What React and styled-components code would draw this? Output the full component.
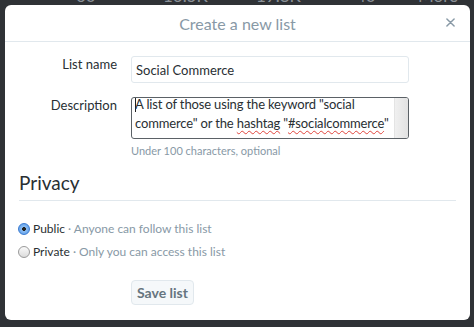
import React from 'react';
import styled, { createGlobalStyle } from 'styled-components';

const Global = createGlobalStyle`
  html, body {
    margin: 0;
    padding: 0;
    background: #2f3236;
    font-family: Lato, "Liberation Sans", sans-serif;
  }
`;

const Page = styled.div`
  position: relative;
  width: 474px;
  height: 327px;
  overflow: hidden;
  background: #2f3236;
`;

const Stats = styled.div`
  position: absolute;
  top: -15px;
  left: 0;
  right: 0;
  font-size: 17px;
  color: #8a9096;
`;

const Stat = styled.span`
  position: absolute;
  left: ${p => p.x}px;
`;

const Modal = styled.div`
  position: absolute;
  top: 5px;
  left: 5px;
  width: 465px;
  height: 315px;
  background: #fff;
  border-radius: 6px;
  display: flex;
  flex-direction: column;
`;

const Header = styled.div`
  height: 36px;
  border-bottom: 1px solid #e1e8ed;
  display: flex;
  align-items: center;
  justify-content: center;
  position: relative;
`;

const Title = styled.h3`
  margin: 0;
  font-size: 16px;
  font-weight: 400;
  color: #8899a6;
`;

const Close = styled.svg`
  position: absolute;
  right: 15px;
  top: 13px;
  width: 9px;
  height: 9px;
`;

const Body = styled.div`
  padding: 14px 14px 0 14px;
`;

const Row = styled.div`
  display: grid;
  grid-template-columns: 98px 278px;
  column-gap: 14px;
  margin-bottom: 14px;
`;

const Label = styled.label`
  text-align: right;
  font-size: 13px;
  color: #292f33;
`;

const Input = styled.div`
  height: 27px;
  box-sizing: border-box;
  border: 1px solid #e1e8ed;
  border-radius: 3px;
  padding: 0 4px;
  display: flex;
  align-items: center;
  font-size: 13px;
  color: #292f33;
`;

const TextArea = styled.div`
  height: 42px;
  box-sizing: border-box;
  border: 1px solid #5b6166;
  border-radius: 3px;
  padding: 0 0 0 3px;
  display: flex;
  overflow: hidden;
  font-size: 13px;
  line-height: 19px;
  color: #292f33;
`;

const AreaText = styled.div`
  flex: 1;
  height: 40px;
  overflow: hidden;
  margin-top: -3px;
  letter-spacing: -0.15px;
`;

const Caret = styled.span`
  display: inline-block;
  width: 1px;
  height: 15px;
  margin-right: -1px;
  vertical-align: -3px;
  background: #222;
`;

const Scroll = styled.div`
  width: 13px;
  background: linear-gradient(to right, #f0f0f0, #e2e2e2);
  border-left: 1px solid #e4e4e4;
`;

const Squiggle = styled.span`
  text-decoration: underline wavy #e0443c;
  text-decoration-thickness: 1px;
  text-underline-offset: 2px;
`;

const Hint = styled.div`
  grid-column: 2;
  font-size: 11px;
  color: #8899a6;
  margin-top: 5px;
`;

const Section = styled.h2`
  margin: 14px 0 0 0;
  font-size: 19px;
  font-weight: 400;
  color: #292f33;
  padding-bottom: 6px;
  border-bottom: 1px solid #e1e8ed;
`;

const Radios = styled.div`
  margin-top: 19px;
  display: flex;
  flex-direction: column;
  gap: 6px;
`;

const Option = styled.div`
  display: flex;
  align-items: center;
  font-size: 12px;
  color: #292f33;
  gap: 3px;
  height: 17px;
`;

const Radio = styled.span`
  width: 12px;
  height: 12px;
  border-radius: 50%;
  box-sizing: border-box;
  border: 1px solid ${p => (p.checked ? '#3b7bd1' : '#9a9a9a')};
  background: ${p =>
    p.checked
      ? 'radial-gradient(circle, #222 0 1.7px, #8fc0f5 2.2px, #4a90e2 100%)'
      : 'linear-gradient(#fafafa, #dcdcdc)'};
  margin-left: -1px;
`;

const Muted = styled.span`
  color: #8899a6;
`;

const Actions = styled.div`
  padding-left: 112px;
  margin-top: 20px;
`;

const Button = styled.button`
  height: 25px;
  padding: 0 5px;
  background: #f5f8fa;
  border: 1px solid #e1e8ed;
  border-radius: 4px;
  font-family: inherit;
  font-size: 14px;
  font-weight: 700;
  color: #66757f;
`;

export default function App() {
  return (
    <Page>
      <Global />
      <Stats>
        <Stat x={76}>60</Stat>
        <Stat x={163}>16.5K</Stat>
        <Stat x={256}>19.8K</Stat>
        <Stat x={356}>40</Stat>
        <Stat x={418}>More</Stat>
      </Stats>
      <Modal>
        <Header>
          <Title>Create a new list</Title>
          <Close viewBox="0 0 10 10">
            <path d="M1 1L9 9M9 1L1 9" stroke="#8899a6" strokeWidth="1.6" strokeLinecap="round" />
          </Close>
        </Header>
        <Body>
          <Row>
            <Label>List name</Label>
            <Input>Social Commerce</Input>
          </Row>
          <Row>
            <Label>Description</Label>
            <TextArea>
              <AreaText>
                <Caret />A list of those using the keyword "social commerce" or the{' '}
                <Squiggle>hashtag</Squiggle> "<Squiggle>#socialcommerce</Squiggle>" is #tweets
              </AreaText>
              <Scroll />
            </TextArea>
            <Hint>Under 100 characters, optional</Hint>
          </Row>
          <Section>Privacy</Section>
          <Radios>
            <Option>
              <Radio checked />
              Public <Muted>· Anyone can follow this list</Muted>
            </Option>
            <Option>
              <Radio />
              Private <Muted>· Only you can access this list</Muted>
            </Option>
          </Radios>
          <Actions>
            <Button>Save list</Button>
          </Actions>
        </Body>
      </Modal>
    </Page>
  );
}
